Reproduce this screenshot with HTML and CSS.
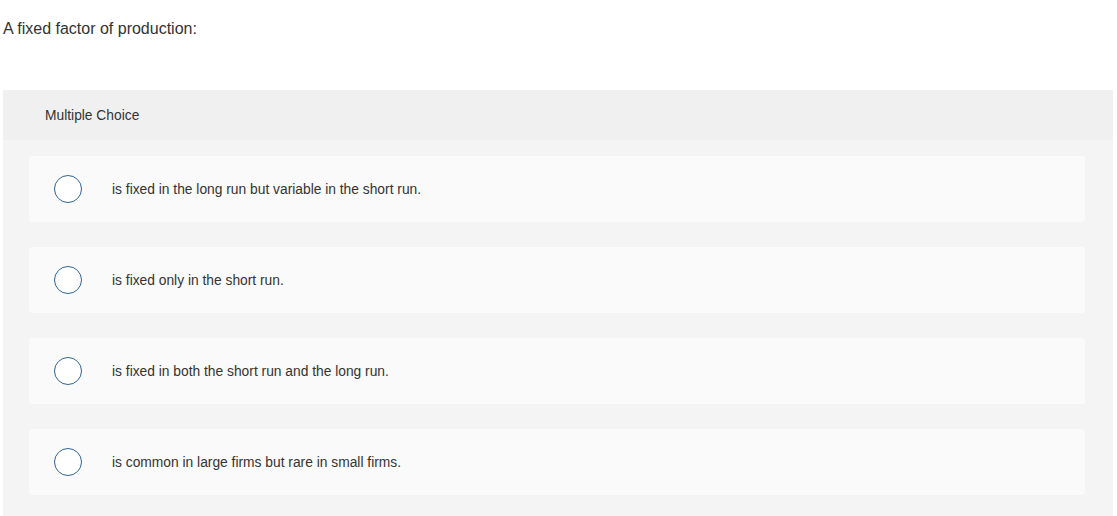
FILE: index.html
```html
<!DOCTYPE html>
<html>
<head>
<meta charset="utf-8">
<link rel="stylesheet" href="styles.css">
</head>
<body>
<div class="question">A fixed factor of production:</div>
<div class="panel">
  <div class="panel-header">Multiple Choice</div>
  <div class="panel-body">
    <div class="option"><span class="radio"></span><span class="label">is fixed in the long run but variable in the short run.</span></div>
    <div class="option"><span class="radio"></span><span class="label">is fixed only in the short run.</span></div>
    <div class="option"><span class="radio"></span><span class="label">is fixed in both the short run and the long run.</span></div>
    <div class="option"><span class="radio"></span><span class="label">is common in large firms but rare in small firms.</span></div>
  </div>
</div>
</body>
</html>
```
FILE: styles.css
```css
html, body {
  margin: 0;
  padding: 0;
  background: #ffffff;
  font-family: "Liberation Sans", Arial, sans-serif;
  color: #333333;
}
.question {
  font-size: 16px;
  line-height: 20px;
  padding: 19px 0 0 3px;
  height: 90px;
  box-sizing: border-box;
  color: #333333;
}
.panel {
  margin: 0 4px 0 3px;
  background: #f4f4f4;
}
.panel-header {
  background: #f0f0f0;
  height: 50px;
  box-sizing: border-box;
  padding: 18px 0 0 42px;
  font-size: 13.8px;
  line-height: 16px;
  color: #333333;
}
.panel-body {
  display: flex;
  flex-direction: column;
  gap: 25px;
  padding: 16px 28px 25px 26px;
}
.option {
  height: 66px;
  background: #fafafa;
  border-radius: 3px;
  display: flex;
  align-items: center;
  padding-left: 25px;
  box-sizing: border-box;
}
.radio {
  width: 28px;
  height: 28px;
  box-sizing: border-box;
  border: 1px solid #2f6396;
  border-radius: 50%;
  background: #ffffff;
  flex: none;
}
.label {
  margin-left: 30px;
  margin-top: 2px;
  font-size: 13.8px;
  line-height: 16px;
  color: #333333;
}
```
